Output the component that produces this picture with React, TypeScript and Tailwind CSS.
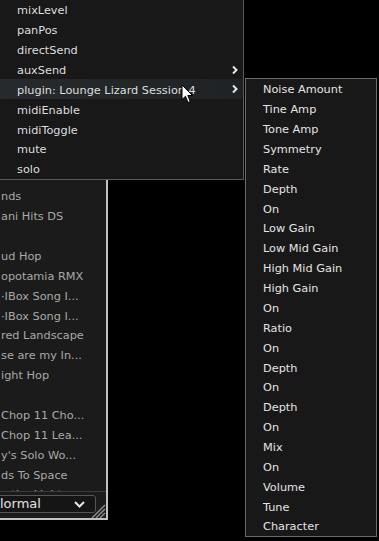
const mainItems = [
  { label: "mixLevel" },
  { label: "panPos" },
  { label: "directSend" },
  { label: "auxSend", sub: true },
  { label: "plugin: Lounge Lizard Session 4", sub: true, active: true },
  { label: "midiEnable" },
  { label: "midiToggle" },
  { label: "mute" },
  { label: "solo" },
];

const paramItems = [
  "Noise Amount",
  "Tine Amp",
  "Tone Amp",
  "Symmetry",
  "Rate",
  "Depth",
  "On",
  "Low Gain",
  "Low Mid Gain",
  "High Mid Gain",
  "High Gain",
  "On",
  "Ratio",
  "On",
  "Depth",
  "On",
  "Depth",
  "On",
  "Mix",
  "On",
  "Volume",
  "Tune",
  "Character",
];

const songItems = [
  "nds",
  "ani Hits DS",
  "",
  "ud Hop",
  "opotamia RMX",
  "\u00b7IBox Song I...",
  "\u00b7IBox Song I...",
  "red Landscape",
  "se are my In...",
  "ight Hop",
  "",
  "Chop 11 Cho...",
  "Chop 11 Lea...",
  "y's Solo Wo...",
  "ds To Space",
  "e the Light",
];

function Chevron() {
  return (
    <svg width="8" height="10" viewBox="0 0 8 10" className="text-[#e6e6e6]">
      <path d="M2 1.5 L5.5 5 L2 8.5" fill="none" stroke="currentColor" strokeWidth="2" />
    </svg>
  );
}

export default function App() {
  return (
    <div
      className="relative h-[541px] w-[379px] overflow-hidden bg-black"
      style={{ fontFamily: '"DejaVu Sans", Verdana, sans-serif' }}
    >
      {/* song list panel behind the menus */}
      <div className="absolute left-0 top-[170px] flex h-[350px] w-[108px] flex-col border-b-2 border-r-2 border-[#c2c2c2] bg-[#1b1b1b]">
        <div className="flex-1 overflow-hidden pt-[16px]">
          {songItems.map((s, i) => (
            <div
              key={i}
              className="flex h-[19.87px] items-center whitespace-nowrap pl-[1px] pt-[4px] text-[11.3px] text-[#a9a9a9]"
            >
              {s}
            </div>
          ))}
        </div>
        <div className="h-px bg-[#3c3c3c]" />
        <div className="relative h-[26px] pt-[3px]">
          <div className="-ml-[10px] flex h-[18px] w-[106px] items-center justify-between rounded-[3px] border border-[#555] bg-[#151515] pl-[9px] pr-[10px]">
            <span className="text-[13px] text-[#e4e4e4]">lormal</span>
            <svg width="11" height="7" viewBox="0 0 11 7">
              <path d="M1 1 L5.5 5.5 L10 1" fill="none" stroke="#e6e6e6" strokeWidth="2" />
            </svg>
          </div>
          <svg className="absolute bottom-0 right-0" width="16" height="14" viewBox="0 0 16 14">
            <path d="M15 1 L2 14 M15 5 L6 14 M15 9 L10 14" stroke="#8a8a8a" strokeWidth="1.5" />
          </svg>
        </div>
      </div>

      {/* main context menu */}
      <div className="absolute left-0 top-0 w-[244px] border-b border-r border-[#595959] bg-[#181818]">
        {mainItems.map((it) => (
          <div
            key={it.label}
            className={
              "flex h-[19.87px] items-center justify-between pl-[17px] pr-[4px] text-[11.3px] text-[#dedede] " +
              (it.active ? "bg-gradient-to-r from-[#272b2e] to-[#1f2224]" : "")
            }
          >
            <span className="whitespace-nowrap pt-[4px]">{it.label}</span>
            {it.sub ? <Chevron /> : null}
          </div>
        ))}
      </div>

      {/* plugin parameter submenu */}
      <div className="absolute left-[245px] top-[78px] h-[459px] w-[132px] border border-[#6a6a6a] bg-[#181818]">
        {paramItems.map((p, i) => (
          <div
            key={i}
            className="flex h-[19.87px] items-center whitespace-nowrap pl-[17px] pt-[4px] text-[11.3px] text-[#e4e4e4]"
          >
            {p}
          </div>
        ))}
      </div>

      {/* mouse pointer */}
      <svg className="absolute left-[181px] top-[84px]" width="13" height="20" viewBox="0 0 13 20">
        <path
          d="M1 1 L1 15.5 L4.5 12.3 L7 18.5 L9.3 17.5 L6.8 11.5 L11.5 11.5 Z"
          fill="#ffffff"
          stroke="#000000"
          strokeWidth="1"
          strokeLinejoin="round"
        />
      </svg>
    </div>
  );
}
